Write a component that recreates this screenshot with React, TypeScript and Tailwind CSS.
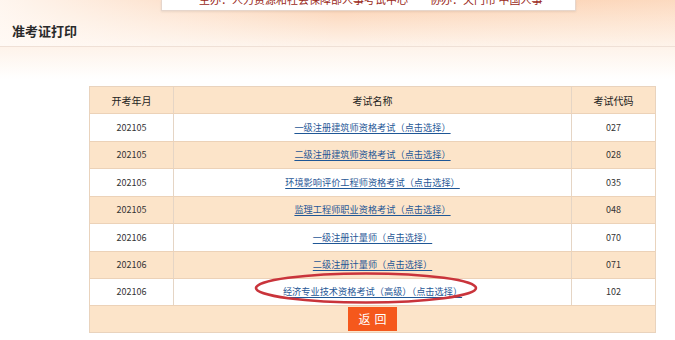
import React from "react";

const rows = [
  { ym: "202105", name: "一级注册建筑师资格考试（点击选择）", code: "027", h: "h-[28px]" },
  { ym: "202105", name: "二级注册建筑师资格考试（点击选择）", code: "028", h: "h-[27px]" },
  { ym: "202105", name: "环境影响评价工程师资格考试（点击选择）", code: "035", h: "h-[28px]" },
  { ym: "202105", name: "监理工程师职业资格考试（点击选择）", code: "048", h: "h-[27px]" },
  { ym: "202106", name: "一级注册计量师（点击选择）", code: "070", h: "h-[28px]" },
  { ym: "202106", name: "二级注册计量师（点击选择）", code: "071", h: "h-[27px]" },
  { ym: "202106", name: "经济专业技术资格考试（高级）（点击选择）", code: "102", h: "h-[27px]" },
];

export default function App() {
  return (
    <div
      className="w-[675px] h-[340px] overflow-hidden bg-white relative"
      style={{ fontFamily: '"Noto Sans CJK SC", "Noto Sans", sans-serif' }}
    >
      {/* top header area */}
      <div className="h-[46px] bg-gradient-to-b from-[#fbcfae] via-[#fde2cd] to-[#fef3ea] relative">
        <div className="absolute inset-0 bg-gradient-to-r from-[#fffaf6]/90 via-transparent to-[#fff4ea]/30" />
        <div className="relative flex">
          <div className="ml-[161px] w-[415px] h-[11px] bg-white border border-t-0 border-[#e6d6cc] shadow-[0_1px_2px_rgba(0,0,0,0.08)] overflow-hidden">
            <div className="mt-[-8px] ml-[37px] text-[11px] leading-[15px] text-[#9a2a22] whitespace-nowrap">
              主办：人力资源和社会保障部人事考试中心　　协办：天门市 中国人事
            </div>
          </div>
        </div>
        <div className="relative mt-[12px] pl-[12px] text-[13px] leading-[16px] font-bold text-[#2a2a2a]">
          准考证打印
        </div>
      </div>
      <div className="h-px bg-[#efe0d6]" />
      <div className="h-[32px] bg-gradient-to-b from-[#fef3ea] to-white" />

      {/* table */}
      <div className="ml-[89px] mt-[7px] w-[567px] border border-[#e9d3bd] relative">
        <div className="flex h-[27px] bg-[#fce4c9] border-b border-[#ecd2b8] text-[10px] text-[#222]">
          <div className="w-[84px] flex items-center justify-center border-r border-[#e5d5c5]">开考年月</div>
          <div className="w-[398px] flex items-center justify-center border-r border-[#e5d5c5]">考试名称</div>
          <div className="flex-1 flex items-center justify-center">考试代码</div>
        </div>
        {rows.map((r, i) => (
          <div
            key={i}
            className={`flex ${r.h} border-b border-[#ecd2b8] text-[9px] text-[#333] ${
              i % 2 === 0 ? "bg-white" : "bg-[#fce4c9]"
            }`}
          >
            <div className="w-[84px] flex items-center justify-center border-r border-[#e5d5c5]">{r.ym}</div>
            <div className="w-[398px] flex items-center justify-center border-r border-[#e5d5c5]">
              <span className="text-[9.2px] text-[#1f5796] underline underline-offset-2">{r.name}</span>
            </div>
            <div className="flex-1 flex items-center justify-center">{r.code}</div>
          </div>
        ))}
        <div className="h-[26px] bg-[#fce4c9] flex justify-center pt-[1px]">
          <div className="w-[49px] h-[24px] bg-[#f5581c] text-white text-[12px] flex items-center justify-center tracking-[4px] pl-[4px]">
            返回
          </div>
        </div>

        {/* red annotation ellipse */}
        <svg
          className="absolute left-[164px] top-[184px]"
          width="226"
          height="34"
          viewBox="0 0 226 34"
        >
          <ellipse cx="112" cy="17" rx="110" ry="14.5" fill="none" stroke="#c9343b" strokeWidth="2.6" />
        </svg>
      </div>
    </div>
  );
}
